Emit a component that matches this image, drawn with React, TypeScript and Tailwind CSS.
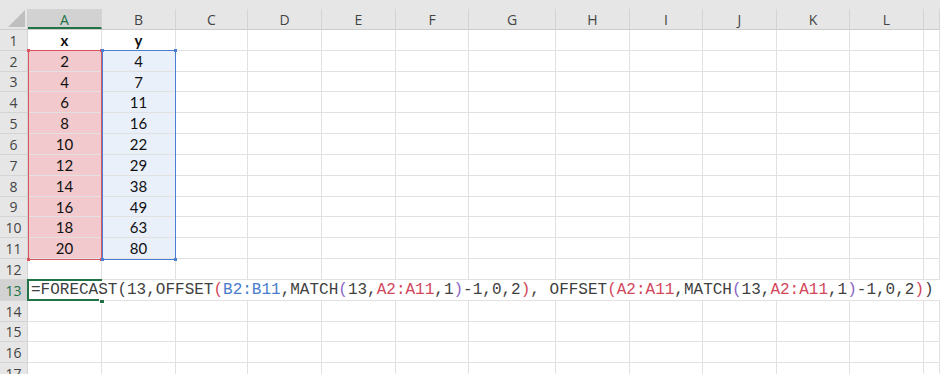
import React from 'react';

// Excel-style sheet: columns, row heights and the FORECAST formula in A13
const columns = [
    { label: 'A', w: 'w-[74px]' },
    { label: 'B', w: 'w-[74px]' },
    { label: 'C', w: 'w-[72px]' },
    { label: 'D', w: 'w-[74px]' },
    { label: 'E', w: 'w-[74px]' },
    { label: 'F', w: 'w-[73px]' },
    { label: 'G', w: 'w-[87px]' },
    { label: 'H', w: 'w-[74px]' },
    { label: 'I', w: 'w-[73px]' },
    { label: 'J', w: 'w-[74px]' },
    { label: 'K', w: 'w-[73px]' },
    { label: 'L', w: 'w-[74px]' },
    { label: '', w: 'w-[16px]' }, // M is cut off at the window edge
];

const rowHeights = [
    'h-[21px]', 'h-[21px]', 'h-[20px]', 'h-[21px]', 'h-[21px]', 'h-[21px]',
    'h-[21px]', 'h-[21px]', 'h-[20px]', 'h-[21px]', 'h-[21px]', 'h-[21px]',
    'h-[21px]', 'h-[21px]', 'h-[20px]', 'h-[21px]', 'h-[21px]',
];

const xs = [2, 4, 6, 8, 10, 12, 14, 16, 18, 20];
const ys = [4, 7, 11, 16, 22, 29, 38, 49, 63, 80];

const ACTIVE_ROW = 13;

type Token = { t: string; c?: 'red' | 'blue' | 'purple' };

const formula: Token[] = [
    { t: '=FORECAST(13,OFFSET' },
    { t: '(', c: 'red' },
    { t: 'B2:B11', c: 'blue' },
    { t: ',MATCH' },
    { t: '(', c: 'purple' },
    { t: '13,' },
    { t: 'A2:A11', c: 'red' },
    { t: ',1' },
    { t: ')', c: 'purple' },
    { t: '-1,0,2' },
    { t: ')', c: 'red' },
    { t: ', OFFSET' },
    { t: '(', c: 'red' },
    { t: 'A2:A11', c: 'red' },
    { t: ',MATCH' },
    { t: '(', c: 'purple' },
    { t: '13,' },
    { t: 'A2:A11', c: 'red' },
    { t: ',1' },
    { t: ')', c: 'purple' },
    { t: '-1,0,2' },
    { t: ')', c: 'red' },
    { t: ')' },
];

const tokenColor = {
    red: 'text-[#d2475a]',
    blue: 'text-[#4a7ccc]',
    purple: 'text-[#8a66c6]',
};

const cellValue = (row: number, col: number) => {
    if (row === 1 && col === 0) return 'x';
    if (row === 1 && col === 1) return 'y';
    if (row >= 2 && row <= 11 && col === 0) return xs[row - 2];
    if (row >= 2 && row <= 11 && col === 1) return ys[row - 2];
    return null;
};

const cellBg = (row: number, col: number) => {
    if (row >= 2 && row <= 11 && col === 0) return 'bg-[#f2c9cc]';
    if (row >= 2 && row <= 11 && col === 1) return 'bg-[#e9f0fa]';
    return '';
};

const HeaderRow = () => (
    <div className="flex h-[21px] bg-[#e6e6e6] border-b border-[#cdcdcd]">
        <div className="w-[28px] shrink-0 border-r border-[#d0d0d0] flex items-end justify-end pr-[2px] pb-[2px]">
            <svg width="17" height="17" viewBox="0 0 17 17">
                <polygon points="17,0 17,17 0,17" fill="#bfbfbf" />
            </svg>
        </div>
        {columns.map((col, c) => {
            const active = col.label === 'A';
            return (
                <div
                    key={c}
                    className={`${col.w} shrink-0 flex items-center justify-center border-r border-[#d4d4d4] text-[14px] ${
                        active
                            ? 'bg-[#d2d2d2] text-[#217346] border-b-2 border-b-[#217346] pt-[2px]'
                            : 'text-[#444444]'
                    }`}
                >
                    {col.label}
                </div>
            );
        })}
    </div>
);

// highlight drawn over the cells that a formula refers to
const RangeBox = ({ left, color }: { left: string; color: 'red' | 'blue' }) => {
    const border = color === 'red' ? 'border-[#d9545f]' : 'border-[#4a7fd4]';
    const dot = color === 'red' ? 'bg-[#d9545f]' : 'bg-[#4a7fd4]';
    return (
        <div className={`absolute ${left} top-[20px] w-[74px] h-[210px] border ${border} pointer-events-none`}>
            <div className={`absolute -left-[2px] -top-[2px] w-[3px] h-[3px] ${dot}`} />
            <div className={`absolute -right-[2px] -top-[2px] w-[3px] h-[3px] ${dot}`} />
            <div className={`absolute -left-[2px] -bottom-[2px] w-[3px] h-[3px] ${dot}`} />
            <div className={`absolute -right-[2px] -bottom-[2px] w-[3px] h-[3px] ${dot}`} />
        </div>
    );
};

const App: React.FC = () => {
    return (
        <div className="w-[940px] h-[374px] overflow-hidden bg-white font-['Open_Sans',sans-serif]">
            <div className="h-[9px] bg-[#e6e6e6]" />
            <HeaderRow />
            <div className="relative">
                {rowHeights.map((h, i) => {
                    const row = i + 1;
                    const isActive = row === ACTIVE_ROW;
                    return (
                        <div key={row} className={`flex ${h}`}>
                            <div
                                className={`w-[28px] shrink-0 flex items-center justify-center border-r border-b border-[#d4d4d4] text-[14px] ${
                                    isActive ? 'bg-[#d2d2d2] text-[#217346]' : 'bg-[#e6e6e6] text-[#444444]'
                                }`}
                            >
                                {row}
                            </div>
                            {columns.map((col, c) => {
                                const value = cellValue(row, c);
                                const vLine = isActive ? '' : 'border-r';
                                if (isActive && c === 0) {
                                    return (
                                        <div
                                            key={c}
                                            className={`${col.w} shrink-0 relative z-10 border-b border-[#e1e1e1] flex items-center pl-[3px] whitespace-nowrap overflow-visible font-['Liberation_Mono',monospace] text-[16px] text-[#3f3f3f]`}
                                        >
                                            {formula.map((tok, k) => (
                                                <span key={k} className={tok.c ? tokenColor[tok.c] : ''}>
                                                    {tok.t}
                                                </span>
                                            ))}
                                        </div>
                                    );
                                }
                                return (
                                    <div
                                        key={c}
                                        className={`${col.w} shrink-0 ${vLine} border-b border-[#e1e1e1] ${cellBg(row, c)} flex items-center justify-center pt-[1px] font-['Lato',sans-serif] text-[15px] text-[#111111] ${
                                            row === 1 ? 'font-bold' : ''
                                        }`}
                                    >
                                        {value}
                                    </div>
                                );
                            })}
                        </div>
                    );
                })}

                <RangeBox left="left-[28px]" color="red" />
                <RangeBox left="left-[102px]" color="blue" />

                {/* active cell A13 with its fill handle */}
                <div className="absolute left-[27px] top-[249px] w-[75px] h-[22px] border-l-2 border-t-2 border-b-2 border-[#217346] z-20 pointer-events-none" />
                <div className="absolute left-[99px] top-[269px] w-[6px] h-[5px] bg-[#217346] border border-white z-30" />
            </div>
        </div>
    );
};

export default App;
